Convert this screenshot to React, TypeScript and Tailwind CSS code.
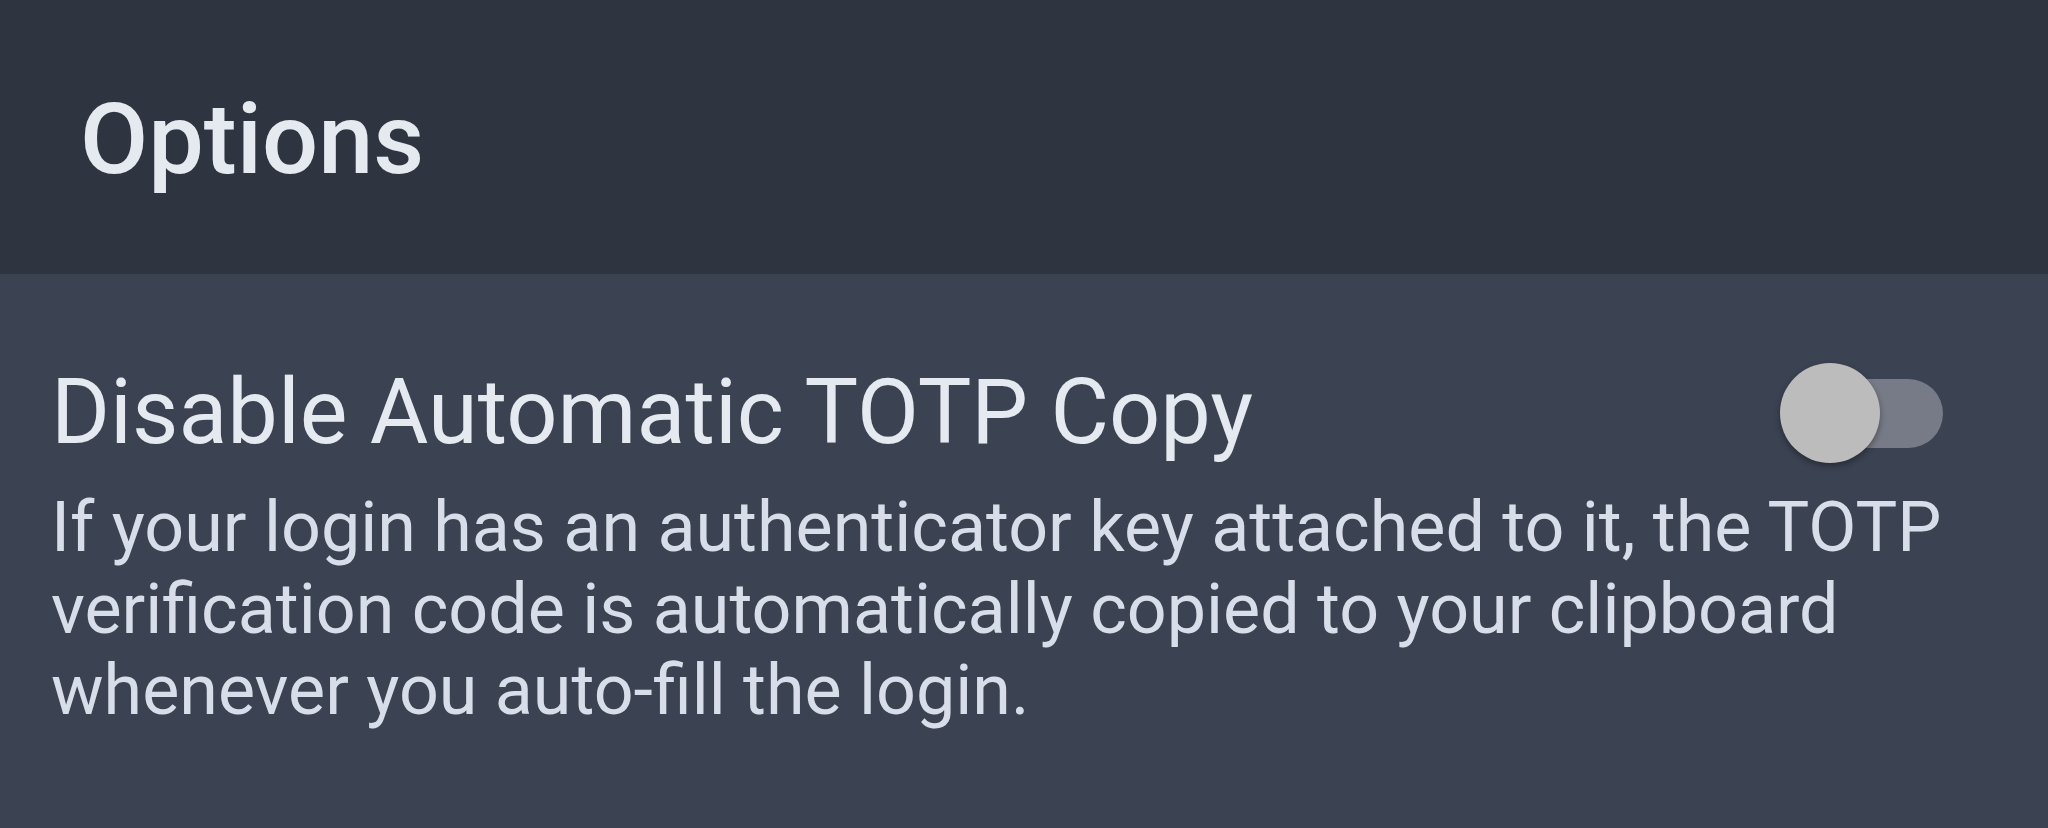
export default function App() {
  return (
    <div className="w-full h-[828px] bg-[#3b4252] overflow-hidden" style={{ fontFamily: "Roboto, 'Noto Sans', sans-serif" }}>
      <header className="h-[274px] bg-[#2e3440] pl-[80px] pt-[90px]">
        <h1 className="text-[99px] leading-[99px] font-medium text-[#e5e9f0]">Options</h1>
      </header>

      <section className="pl-[51px] pr-[57px] pt-[87px]">
        <div className="flex items-center justify-between">
          <h2 className="text-[90px] leading-[104px] text-[#e5e9f0]">Disable Automatic TOTP Copy</h2>
          {/* switch, off state */}
          <div className="relative w-[163px] h-[100px] mr-[48px] flex items-center justify-end">
            <div className="w-[150px] h-[69px] rounded-full bg-[#767b87]" />
            <div className="absolute left-0 top-0 w-[100px] h-[100px] rounded-full bg-[#bcbcbc] shadow-[0_3px_6px_rgba(0,0,0,0.35)]" />
          </div>
        </div>
        <p className="mt-[22px] text-[70px] leading-[81.5px] text-[#d8dee9]">
          If your login has an authenticator key attached to it, the TOTP verification code is automatically copied to your clipboard whenever you auto-fill the login.
        </p>
      </section>
    </div>
  );
}
